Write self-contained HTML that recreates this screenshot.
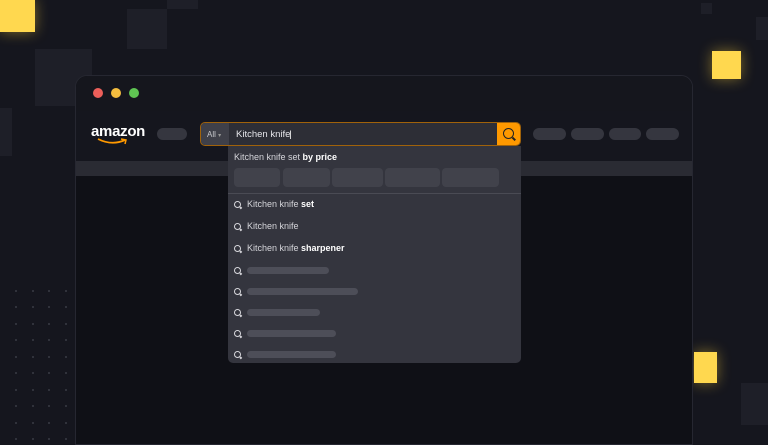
<!DOCTYPE html>
<html><head><meta charset="utf-8"><style>
*{margin:0;padding:0;box-sizing:border-box}
body{width:768px;height:439px;overflow:hidden;background:#15161e;position:relative;font-family:"Liberation Sans",sans-serif}
.a{position:absolute}
.y{background:#ffd84f;box-shadow:0 0 14px rgba(255,210,60,.45)}
.d{background:#1e1f28}
.dot{position:absolute;width:2px;height:2px;border-radius:1px;background:#3a3b45}
.pill{position:absolute;height:12px;border-radius:6px;background:#35363f}
.q{position:absolute;left:6px;width:7px;height:7px;border:1.5px solid #d8d8dd;border-radius:50%}
.q:after{content:"";position:absolute;right:-1.5px;bottom:-1.5px;width:2px;height:1.5px;background:#d8d8dd;transform:rotate(45deg)}
.row{position:absolute;left:0;width:293px;height:20px;font-size:9px;color:#d5d5da}
.row span{position:absolute;left:19px;top:0}
.bar{position:absolute;left:19px;top:2px;height:7px;border-radius:4px;background:#4d4e58}
.chip{position:absolute;top:22px;height:19px;border-radius:4px;background:#41424b}
</style></head><body>
<div class="a d" style="left:127px;top:9px;width:40px;height:40px"></div>
<div class="a d" style="left:167px;top:0;width:31px;height:9px"></div>
<div class="a d" style="left:35px;top:49px;width:57px;height:57px"></div>
<div class="a d" style="left:0;top:108px;width:12px;height:48px"></div>
<div class="a d" style="left:741px;top:383px;width:27px;height:42px"></div>
<div class="a d" style="left:701px;top:3px;width:11px;height:11px"></div>
<div class="a d" style="left:756px;top:17px;width:12px;height:23px"></div>
<div class="a y" style="left:0;top:0;width:35px;height:32px"></div>
<div class="a y" style="left:712px;top:51px;width:29px;height:28px"></div>
<div class="a y" style="left:694px;top:352px;width:23px;height:31px"></div>
<div id="dots"></div>
<script>
var h='';[15,32,48,65].forEach(function(x){[290,306,323,339,356,372,389,405,422,438].forEach(function(y){h+='<div class="dot" style="left:'+x+'px;top:'+y+'px"></div>'})});
document.getElementById('dots').innerHTML=h;
</script>
<div class="a" style="left:75px;top:75px;width:618px;height:370px;background:#0f1016;border:1px solid #262731;border-radius:12px 12px 0 0;overflow:hidden">
 <div class="a" style="left:0;top:0;width:618px;height:35px;background:#15161d"></div>
 <div class="a" style="left:17px;top:12px;width:10px;height:10px;border-radius:50%;background:#ec5f5a"></div>
 <div class="a" style="left:35px;top:12px;width:10px;height:10px;border-radius:50%;background:#f4bd3f"></div>
 <div class="a" style="left:53px;top:12px;width:10px;height:10px;border-radius:50%;background:#5fc553"></div>
 <div class="a" style="left:0;top:35px;width:618px;height:50px;background:#15161e"></div>
 <div class="a" style="left:0;top:85px;width:618px;height:15px;background:#2a2b33"></div>
 <div class="a" style="left:15px;top:47px;color:#fff;font-weight:bold;font-size:15px;letter-spacing:-.3px">amazon</div>
 <svg class="a" style="left:20px;top:61px" width="40" height="9"><path d="M2 2 Q16 9 29 3" stroke="#f90" stroke-width="1.8" fill="none"/><path d="M25 2 L30 3 L29 7" stroke="#f90" stroke-width="1.5" fill="none"/></svg>
</div>
<div class="pill" style="left:157px;top:128px;width:30px"></div>
<div class="pill" style="left:533px;top:128px;width:33px"></div>
<div class="pill" style="left:571px;top:128px;width:33px"></div>
<div class="pill" style="left:609px;top:128px;width:32px"></div>
<div class="pill" style="left:646px;top:128px;width:33px"></div>
<div class="a" style="left:200px;top:122px;width:321px;height:24px;border:1px solid #a0620a;border-radius:5px;background:#2d2e36;overflow:hidden">
 <div class="a" style="left:0;top:0;width:28px;height:24px;background:#3f4049;color:#c8c8cd;font-size:8px;padding:7px 0 0 6px">All <span style="font-size:6px;color:#999">▾</span></div>
 <div class="a" style="left:35px;top:6px;color:#e5e5ea;font-size:9.5px">Kitchen knife<span style="color:#fff;margin-left:-1px">|</span></div>
 <div class="a" style="left:296px;top:-1px;width:25px;height:26px;background:#ff9900"></div>
 <div class="a" style="left:302px;top:5px;width:11px;height:11px;border:1.6px solid #222;border-radius:50%"></div>
 <div class="a" style="left:311px;top:15px;width:4px;height:1.6px;background:#222;transform:rotate(45deg)"></div>
</div>
<div class="a" style="left:228px;top:146px;width:293px;height:217px;background:#34353e;border-radius:0 0 5px 5px">
 <div class="a" style="left:6px;top:6px;font-size:9px;color:#d5d5da">Kitchen knife set <b style="color:#fff">by price</b></div>
 <div class="chip" style="left:6px;width:46px"></div>
 <div class="chip" style="left:55px;width:47px"></div>
 <div class="chip" style="left:104px;width:51px"></div>
 <div class="chip" style="left:157px;width:55px"></div>
 <div class="chip" style="left:214px;width:57px"></div>
 <div class="a" style="left:0;top:47px;width:293px;height:1px;background:#4a4b54"></div>
 <div class="row" style="top:53px"><i class="q" style="top:2px"></i><span>Kitchen knife <b style="color:#fff">set</b></span></div>
 <div class="row" style="top:75px"><i class="q" style="top:2px"></i><span>Kitchen knife</span></div>
 <div class="row" style="top:97px"><i class="q" style="top:2px"></i><span>Kitchen knife <b style="color:#fff">sharpener</b></span></div>
 <div class="row" style="top:119px"><i class="q" style="top:2px"></i><div class="bar" style="width:82px"></div></div>
 <div class="row" style="top:140px"><i class="q" style="top:2px"></i><div class="bar" style="width:111px"></div></div>
 <div class="row" style="top:161px"><i class="q" style="top:2px"></i><div class="bar" style="width:73px"></div></div>
 <div class="row" style="top:182px"><i class="q" style="top:2px"></i><div class="bar" style="width:89px"></div></div>
 <div class="row" style="top:203px"><i class="q" style="top:2px"></i><div class="bar" style="width:89px"></div></div>
</div>
</body></html>
